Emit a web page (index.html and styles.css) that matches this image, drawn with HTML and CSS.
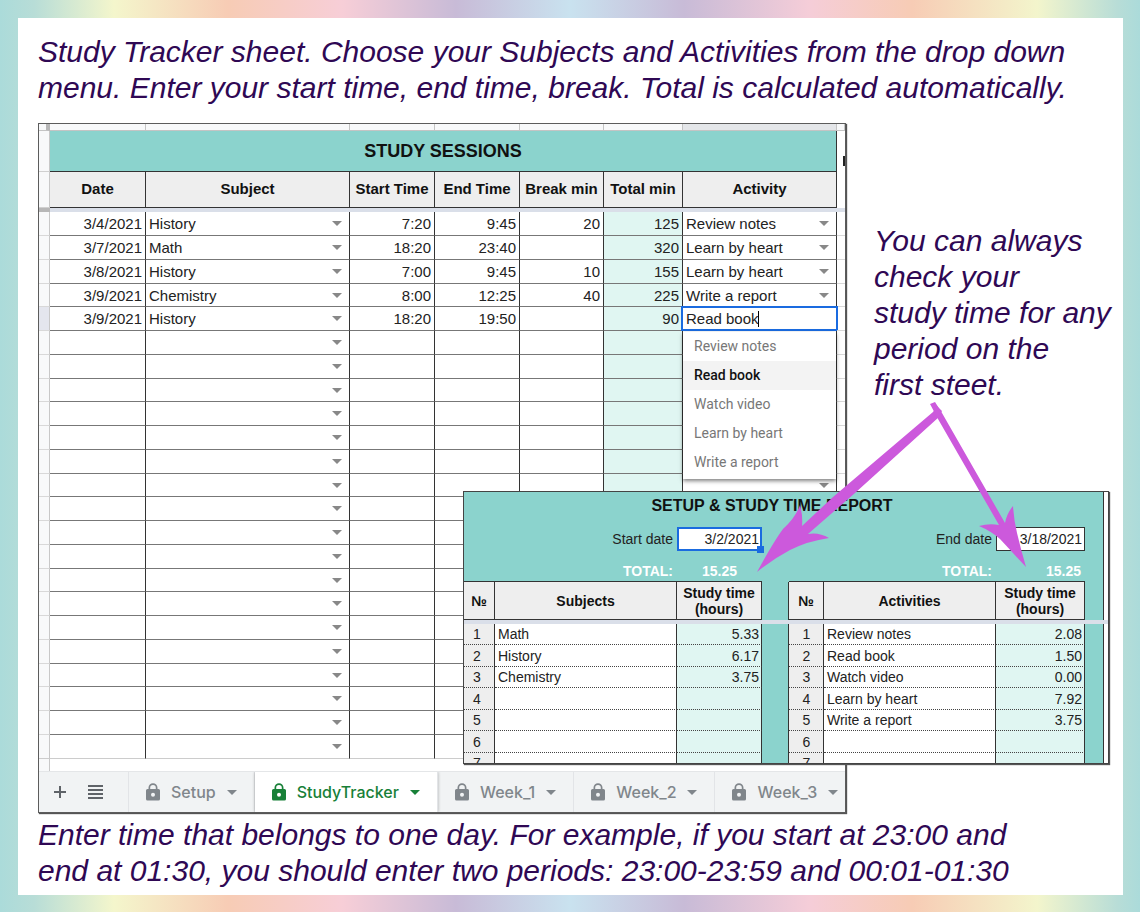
FILE: index.html
```html
<!DOCTYPE html>
<html lang="en">

<head>
  <meta charset="UTF-8">
  <meta name="viewport" content="width=device-width, initial-scale=1.0">
  <title>Study Tracker</title>
  <link rel="stylesheet" href="styles.css">
</head>

<body>
  <main class="paper">
    <p class="caption">Study Tracker sheet. Choose your Subjects and Activities from the drop down<br>
      menu. Enter your start time, end time, break. Total is calculated automatically.</p>

    <div class="stage">
      <section class="sheet">
        <table class="sessions">
          <colgroup>
            <col class="c-gutter">
            <col class="c-date">
            <col>
            <col class="c-time">
            <col class="c-time">
            <col class="c-break">
            <col class="c-total">
            <col class="c-activity">
            <col class="c-spare">
          </colgroup>
          <thead>
            <tr class="strip">
              <td class="corner"></td>
              <td></td>
              <td></td>
              <td></td>
              <td></td>
              <td></td>
              <td></td>
              <td class="current"></td>
              <td></td>
            </tr>
            <tr class="title">
              <td class="gutter"></td>
              <th colspan="7">STUDY SESSIONS</th>
              <td class="spare cut"></td>
            </tr>
            <tr class="heads">
              <td class="gutter"></td>
              <th>Date</th>
              <th>Subject</th>
              <th>Start Time</th>
              <th>End Time</th>
              <th>Break min</th>
              <th>Total min</th>
              <th>Activity</th>
              <td class="spare"></td>
            </tr>
            <tr class="freeze">
              <td></td>
              <td colspan="8"></td>
            </tr>
          </thead>
          <tbody id="session-rows">
            <!-- Rows are added by script.js -->
          </tbody>
        </table>

        <nav class="tabs">
          <div class="tools">
            <button type="button" aria-label="Add sheet">
              <svg width="12" height="12" viewBox="0 0 12 12"><path d="M6 0v12M0 6h12" stroke="#5f6368" stroke-width="2"/></svg>
            </button>
            <button type="button" aria-label="All sheets">
              <svg width="15" height="14" viewBox="0 0 15 14"><path d="M0 1h15M0 5h15M0 9h15M0 13h15" stroke="#5f6368" stroke-width="2"/></svg>
            </button>
          </div>
          <button type="button" class="tab"><svg class="lock" viewBox="0 0 14 18"><use href="#lock"/></svg>Setup<i class="arrow"></i></button>
          <button type="button" class="tab active"><svg class="lock" viewBox="0 0 14 18"><use href="#lock"/></svg>StudyTracker<i class="arrow"></i></button>
          <button type="button" class="tab"><svg class="lock" viewBox="0 0 14 18"><use href="#lock"/></svg>Week_1<i class="arrow"></i></button>
          <button type="button" class="tab"><svg class="lock" viewBox="0 0 14 18"><use href="#lock"/></svg>Week_2<i class="arrow"></i></button>
          <button type="button" class="tab"><svg class="lock" viewBox="0 0 14 18"><use href="#lock"/></svg>Week_3<i class="arrow"></i></button>
        </nav>
      </section>

      <p class="note">You can always<br>check your<br>study time for any<br>period on the<br>first steet.</p>

      <section class="report">
        <table>
          <colgroup>
            <col class="r-num">
            <col class="r-subject">
            <col class="r-hours">
            <col class="r-gap">
            <col class="r-num2">
            <col class="r-activity">
            <col class="r-hours2">
            <col>
            <col class="r-edge">
          </colgroup>
          <thead>
            <tr class="r-title">
              <th colspan="7">SETUP &amp; STUDY TIME REPORT</th>
              <td class="rim"></td>
              <td class="edge"></td>
            </tr>
            <tr class="r-dates">
              <td colspan="2"><label for="start-date">Start date</label></td>
              <td class="picked"><input type="text" id="start-date" value="3/2/2021"></td>
              <td></td>
              <td colspan="2"><label for="end-date">End date</label></td>
              <td><input type="text" id="end-date" value="3/18/2021"></td>
              <td class="rim"></td>
              <td class="edge"></td>
            </tr>
            <tr class="r-total">
              <td colspan="2" class="line">TOTAL:</td>
              <td class="line mid">15.25</td>
              <td></td>
              <td colspan="2" class="line">TOTAL:</td>
              <td class="line">15.25</td>
              <td class="rim"></td>
              <td class="edge"></td>
            </tr>
            <tr class="r-heads">
              <th>№</th>
              <th>Subjects</th>
              <th>Study time (hours)</th>
              <td class="gap"></td>
              <th>№</th>
              <th>Activities</th>
              <th>Study time (hours)</th>
              <td class="rim"></td>
              <td class="edge"></td>
            </tr>
            <tr class="freeze">
              <td colspan="9"></td>
            </tr>
          </thead>
          <tbody id="report-rows">
            <!-- Rows are added by script.js -->
          </tbody>
        </table>
      </section>

      <svg class="pointers" width="320" height="200" viewBox="740 390 320 200" aria-hidden="true">
        <g fill="#cc59dc">
          <path d="M933 412L833 497L802 526Q803 516 800 505Q796 517 783 529Q774 541 757 572Q773 559 790 550Q808 541 829 538Q819 532 808 534L855 493L939 417L942 411L937 406Z"/>
          <path d="M930 404L935 402L942 413L1005 523Q1007 513 1013 506Q1014 521 1017 533Q1021 550 1026 567Q1013 553 1000 539Q991 531 979 526Q989 523 999 525L938 419Z"/>
        </g>
      </svg>
    </div>

    <p class="caption">Enter time that belongs to one day. For example, if you start at 23:00 and<br>
      end at 01:30, you should enter two periods: 23:00-23:59 and 00:01-01:30</p>
  </main>

  <svg width="0" height="0" class="defs" aria-hidden="true">
    <symbol id="lock" viewBox="0 0 14 18">
      <path fill="currentColor" fill-rule="evenodd" d="M2.500 6V4.700a4.500 4.500 0 0 1 9 0V6H12.500A1.500 1.500 0 0 1 14 7.500V16A1.500 1.500 0 0 1 12.500 17.500H1.500A1.500 1.500 0 0 1 0 16V7.500A1.500 1.500 0 0 1 1.500 6ZM4.200 6H9.800V4.700a2.800 2.800 0 0 0-5.600 0ZM7 9.800a2 2 0 1 0 0 4 2 2 0 0 0 0-4Z"/>
    </symbol>
  </svg>

  <script src="script.js"></script>
</body>

</html>
```

FILE: styles.css
```css
* {
  box-sizing: border-box;
}

body {
  margin: 0;
  min-height: 100vh;
  padding: 18px 17px 17px 18px;
  font-family: "Liberation Sans", Arial, sans-serif;
  color: #222;
  background: linear-gradient(90deg, #abdbda 0%, #b8ddd7 3%, #f4f6cc 10%, #f7ccb5 20%, #f7ced7 30%,
      #c8bbd7 40%, #c9e2ef 50%, #c8bbd7 60%, #f5cdd8 71%, #f7ccb5 80%, #f3f5cc 91%, #b8ddd7 98%, #abdbda 100%);
}

p,
table,
button,
input,
select {
  margin: 0;
  font: inherit;
}

button {
  padding: 0;
  border: 0;
  background: none;
  color: inherit;
}

.defs {
  position: absolute;
}

.paper {
  padding: 16px 0 6px;
  background: #fff;
}

/* Big purple captions */
.caption,
.note {
  font-size: 30px;
  font-style: italic;
  line-height: 36px;
  color: #2f0854;
  white-space: nowrap;
}

.caption {
  padding-left: 20px;
}

.note {
  margin-top: 100px;
}

.stage {
  position: relative;
  display: grid;
  grid-template-columns: minmax(0, 1fr) 249px;
  gap: 28px;
  margin: 17px 0 4px;
  padding-left: 20px;
}

/* Tables */
table {
  width: 100%;
  table-layout: fixed;
  border-collapse: separate;
  border-spacing: 0;
}

td,
th {
  padding: 0;
}

.freeze td {
  height: 4px;
  background: #dadfe9;
}

.sheet {
  border: 1px solid #5c5c5c;
  box-shadow: 1px 1px 1px #555;
  min-width: 0;
}

.sessions {
  font-size: 15px;
  line-height: 17px;
}

.c-gutter { width: 11px; }
.c-date { width: 96px; }
.c-time { width: 85px; }
.c-break { width: 84px; }
.c-total { width: 79px; }
.c-activity { width: 154px; }
.c-spare { width: 8px; }

.strip td {
  height: 7px;
  background: #f8f9fa;
  border-right: 1px solid #c4c4c4;
  border-bottom: 1px solid #c4c4c4;
}

.strip .corner {
  border-right: 4px solid #b7b7b7;
}

.strip .current {
  background: #e4e6e9;
}

.gutter {
  background: #f8f9fa;
  border-right: 1px solid #c8c8c8;
  border-bottom: 1px solid #d0d0d0;
}

.gutter.current {
  background: #e4e6ee;
}

.spare {
  border-bottom: 1px solid #e0e0e0;
}

.title .spare,
.heads .spare {
  border-bottom: 0;
}

/* Sliver of the next column's text */
.title .cut {
  background: linear-gradient(#222, #222) right 0 bottom 6px / 2px 10px no-repeat;
}

.title th {
  height: 41px;
  font-size: 18px;
  color: #111;
  background: #8bd3cd;
  border-right: 1px solid #333;
  border-bottom: 1px solid #333;
}

.heads th {
  height: 36px;
  padding-bottom: 2px;
  color: #111;
  background: #eee;
  border-right: 1px solid #333;
  border-bottom: 1px solid #333;
}

.sessions .freeze td:first-child {
  background: #b7b7b7;
}

.sessions tbody td {
  position: relative;
  height: 24px;
  padding: 0 3px;
  border-bottom: 1px solid #777;
}

.sessions tbody tr:nth-child(4n) td {
  height: 23px;
}

.sessions tbody .cell {
  text-align: right;
  border-right: 1px solid #333;
}

.sessions tbody .gutter,
.sessions tbody .spare {
  border-bottom-color: #d8d8d8;
}

.sessions tbody .total {
  background: #e0f6f2;
}

.sessions tbody tr.last td {
  border-bottom-color: #ccc;
}

.sessions tbody tr.rest td {
  height: 12px;
  border-bottom: 0;
}

.arrow {
  width: 0;
  height: 0;
  border: 5px solid transparent;
  border-top-color: currentColor;
  border-bottom: 0;
}

.pick select {
  display: block;
  width: 100%;
  height: 17px;
  padding: 0;
  border: 0;
  background: none;
  color: inherit;
  appearance: none;
}

.pick .arrow {
  position: absolute;
  right: 7px;
  top: 9px;
  color: #888;
  pointer-events: none;
}

/* Cell being edited, with its list of choices */
.editor {
  position: absolute;
  inset: -1px -1px -1px -2px;
  width: 157px;
  padding: 0 3px;
  border: 2px solid #1a6be0;
  background: #fff;
  color: #222;
  outline: 0;
}

.caret {
  position: absolute;
  left: 75px;
  top: 4px;
  width: 1px;
  height: 16px;
  background: #000;
}

.menu {
  position: absolute;
  z-index: 1;
  top: 25px;
  left: 0;
  right: 0;
  margin: 0;
  padding: 0 0 2px;
  list-style: none;
  background: #fff;
  box-shadow: 0 2px 4px rgba(0, 0, 0, 0.5);
}

.menu button {
  display: block;
  width: 100%;
  padding: 0 11px;
  text-align: left;
  font: 14px/29px Roboto, sans-serif;
  color: #777;
}

.menu .chosen {
  font-weight: 500;
  color: #111;
  background: #f3f3f3;
}

/* Sheet tabs */
.tabs {
  display: flex;
  height: 41px;
  overflow: hidden;
  background: #f1f3f4;
  border-top: 1px solid #e4e6e8;
}

.tools {
  display: flex;
  flex: none;
  align-items: center;
  gap: 22px;
  width: 90px;
  padding-left: 15px;
  border-right: 1px solid #e2e4e7;
}

.tools button {
  display: flex;
}

.tab {
  display: flex;
  flex: none;
  align-items: center;
  gap: 11px;
  padding: 0 17px;
  border-right: 1px solid #e2e4e7;
  font: 500 16px/20px Inter, sans-serif;
  color: #80868b;
}

.tab.active {
  color: #188038;
  background: #fff;
  box-shadow: 0 0 3px rgba(0, 0, 0, 0.3);
}

.lock {
  width: 14px;
  height: 18px;
}

/* Report laid over the sheet */
.report {
  position: absolute;
  top: 368px;
  right: 14px;
  width: 646px;
  height: 273px;
  overflow: hidden;
  border: 1px solid #444;
  box-shadow: 1px 1px 1px #555;
  background: #8bd3cd;
  font-size: 14px;
  line-height: 16px;
}

.r-num { width: 31px; }
.r-subject { width: 182px; }
.r-hours { width: 85px; }
.r-gap { width: 27px; }
.r-num2 { width: 35px; }
.r-activity { width: 172px; }
.r-hours2 { width: 89px; }
.r-edge { width: 4px; }

.rim {
  border-right: 1px solid #333;
}

.edge {
  background: #fff;
}

.r-title th {
  height: 35px;
  padding: 0 5px 7px 0;
  font-size: 16px;
  color: #111;
}

.r-dates td {
  position: relative;
  height: 24px;
  text-align: right;
}

.r-dates label {
  padding-right: 4px;
}

.r-dates input {
  display: block;
  width: 100%;
  height: 24px;
  padding: 0 2px;
  border: 1px solid #333;
  background: #fff;
  color: #222;
  text-align: right;
}

.picked input {
  border: 2px solid #1a6be0;
  padding: 0 1px;
}

.picked::after {
  content: "";
  position: absolute;
  right: -2px;
  bottom: -2px;
  width: 7px;
  height: 7px;
  background: #1a6be0;
}

.r-total td {
  height: 31px;
  padding: 9px 4px 0;
  font-weight: bold;
  text-align: right;
  color: #fff;
}

.r-total .line {
  border-bottom: 1px solid #333;
}

.r-total .mid {
  text-align: center;
}

.r-heads th {
  height: 38px;
  color: #111;
  background: #eee;
  border-right: 1px solid #333;
  border-bottom: 1px solid #333;
}

.gap {
  border-right: 1px solid #333;
}

.report tbody td {
  height: 21px;
}

.report tbody tr:nth-child(even) td {
  height: 22px;
}

.report tbody .num,
.report tbody .name,
.report tbody .hours {
  padding: 0 2px 0 3px;
  border-right: 1px solid #333;
  border-bottom: 1px dotted #444;
  background: #fff;
}

.report tbody .num {
  text-align: center;
  background: #eee;
}

.report tbody .num:first-child {
  padding-right: 7px;
}

.report tbody .hours {
  text-align: right;
  background: #e0f6f2;
}

.pointers {
  position: absolute;
  top: 267px;
  right: 63px;
  pointer-events: none;
}
```

FILE: script.js
```js
const sessions = [
  ['3/4/2021', 'History', '7:20', '9:45', '20', '125', 'Review notes'],
  ['3/7/2021', 'Math', '18:20', '23:40', '', '320', 'Learn by heart'],
  ['3/8/2021', 'History', '7:00', '9:45', '10', '155', 'Learn by heart'],
  ['3/9/2021', 'Chemistry', '8:00', '12:25', '40', '225', 'Write a report'],
  ['3/9/2021', 'History', '18:20', '19:50', '', '90', 'Read book'],
];
const subjects = [['Math', '5.33'], ['History', '6.17'], ['Chemistry', '3.75']];
const activities = [
  ['Review notes', '2.08'],
  ['Read book', '1.50'],
  ['Watch video', '0.00'],
  ['Learn by heart', '7.92'],
  ['Write a report', '3.75'],
];
const ROWS = 23;
const EDITED = 4;
const REPORT_ROWS = 7;

function pick(label, value) {
  return `<td class="cell pick"><select aria-label="${label}"><option>${value}</option></select><i class="arrow"></i></td>`;
}

function editor(value) {
  const items = activities.map(([name]) =>
    `<li><button type="button" class="${name === value ? 'chosen' : ''}">${name}</button></li>`).join('');
  return `<td class="cell"><input class="editor" type="text" aria-label="Activity" value="${value}"><span class="caret"></span><ul class="menu">${items}</ul></td>`;
}

let html = '';
for (let i = 0; i < ROWS; i++) {
  const [date, subject, start, end, rest, total, activity] = sessions[i] || Array(7).fill('');
  html += `<tr class="${i === ROWS - 1 ? 'last' : ''}">
    <td class="gutter ${i === EDITED ? 'current' : ''}"></td>
    <td class="cell">${date}</td>
    ${pick('Subject', subject)}
    <td class="cell">${start}</td>
    <td class="cell">${end}</td>
    <td class="cell">${rest}</td>
    <td class="cell total">${total}</td>
    ${i === EDITED ? editor(activity) : pick('Activity', activity)}
    <td class="spare"></td>
  </tr>`;
}
html += '<tr class="rest"><td class="gutter"></td><td colspan="8"></td></tr>';
document.getElementById('session-rows').innerHTML = html;

html = '';
for (let i = 0; i < REPORT_ROWS; i++) {
  const [subject, spent] = subjects[i] || ['', ''];
  const [activity, used] = activities[i] || ['', ''];
  html += `<tr>
    <td class="num">${i + 1}</td>
    <td class="name">${subject}</td>
    <td class="hours">${spent}</td>
    <td class="gap"></td>
    <td class="num">${i + 1}</td>
    <td class="name">${activity}</td>
    <td class="hours">${used}</td>
    <td class="rim"></td>
    <td class="edge"></td>
  </tr>`;
}
document.getElementById('report-rows').innerHTML = html;
```
